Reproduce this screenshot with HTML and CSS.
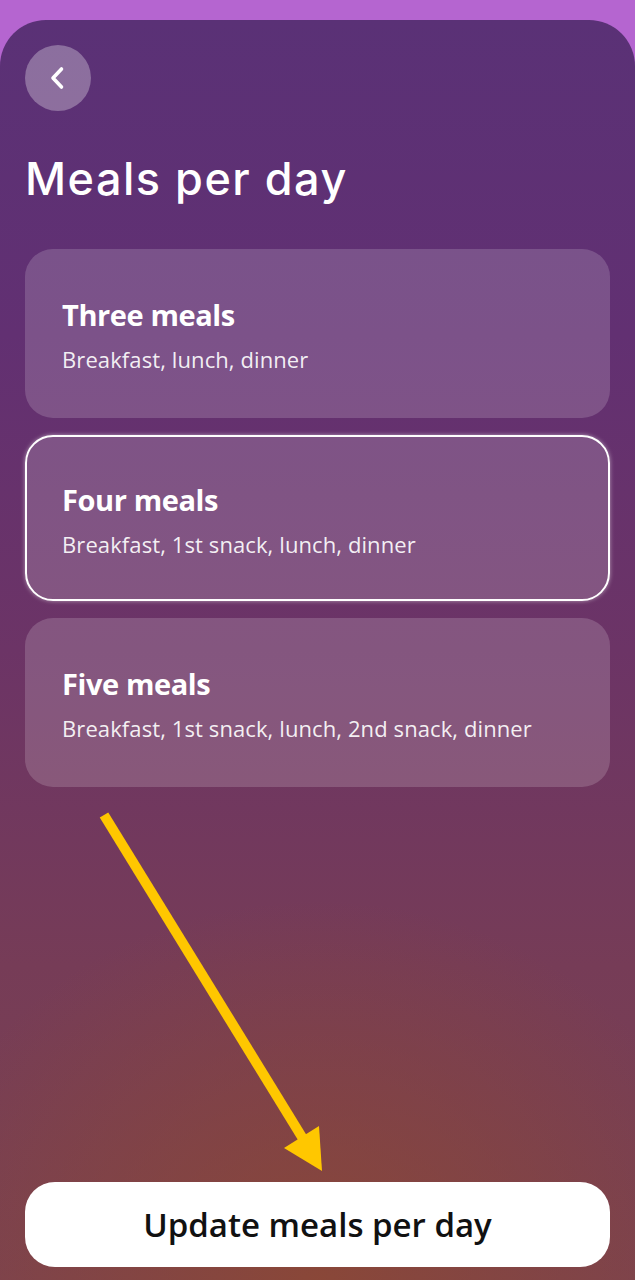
FILE: index.html
```html
<!DOCTYPE html>
<html lang="en">
<head>
<meta charset="utf-8">
<title>Meals per day</title>
<link rel="stylesheet" href="styles.css">
</head>
<body>
<main class="sheet">
  <button class="back" aria-label="Back">
    <svg class="back-icon" width="16" height="24" viewBox="0 0 16 24"><path d="M12.5 3 L4 12 L12.5 21" fill="none" stroke="#fff" stroke-width="3.6" stroke-linecap="round" stroke-linejoin="round"/></svg>
  </button>
  <h1 class="title">Meals per day</h1>
  <ul class="options">
    <li class="option">
      <span class="option-name">Three meals</span>
      <span class="option-desc">Breakfast, lunch, dinner</span>
    </li>
    <li class="option selected">
      <span class="option-name">Four meals</span>
      <span class="option-desc">Breakfast, 1st snack, lunch, dinner</span>
    </li>
    <li class="option">
      <span class="option-name">Five meals</span>
      <span class="option-desc">Breakfast, 1st snack, lunch, 2nd snack, dinner</span>
    </li>
  </ul>
  <div class="spacer"></div>
  <button class="update">Update meals per day</button>
  <svg class="pointer" width="635" height="1280" viewBox="0 0 635 1280">
    <line x1="104" y1="815" x2="305" y2="1142" stroke="#ffc700" stroke-width="10" stroke-linecap="butt"/>
    <polygon points="322,1171 284,1148 319,1126" fill="#ffc700"/>
  </svg>
</main>
</body>
</html>
```
FILE: styles.css
```css
* { box-sizing: border-box; }

html, body {
  margin: 0;
  padding: 0;
}

body {
  background: #b565d0;
  font-family: "Open Sans", "Noto Sans", sans-serif;
  color: #fff;
  width: 635px;
  height: 1280px;
  overflow: hidden;
}

.sheet {
  position: relative;
  margin-top: 20px;
  height: 1260px;
  border-radius: 46px 46px 0 0;
  padding: 25px 25px 13px;
  display: flex;
  flex-direction: column;
  background:
    radial-gradient(ellipse 420px 380px at 50% 100%, rgba(140, 72, 52, 0.85), rgba(140, 72, 52, 0) 100%),
    linear-gradient(180deg, #5a3176 0%, #623072 25%, #6c3466 50%, #763c57 75%, #7b4250 100%);
}

.back {
  width: 66px;
  height: 66px;
  border-radius: 50%;
  border: none;
  padding: 0;
  background: rgba(255, 255, 255, 0.3);
  display: flex;
  align-items: center;
  justify-content: center;
  flex: none;
}

.back-icon {
  margin-left: -3px;
}

.title {
  margin: 42px 0 0 0;
  font-family: "Inter", sans-serif;
  font-weight: 500;
  font-size: 45px;
  line-height: 52px;
  letter-spacing: 1.5px;
}

.options {
  list-style: none;
  margin: 44px 0 0;
  padding: 0;
  display: flex;
  flex-direction: column;
  gap: 17px;
}

.option {
  height: 169px;
  border-radius: 28px;
  background: rgba(255, 255, 255, 0.17);
  padding: 4px 35px 0 35px;
  display: flex;
  flex-direction: column;
  justify-content: center;
  gap: 11px;
  border: 2px solid transparent;
}

.option.selected {
  height: 166px;
  border-color: #fff;
  box-shadow: 0 0 4px rgba(255, 255, 255, 0.5);
}

.option-name {
  font-weight: 700;
  font-size: 29px;
  line-height: 36px;
  letter-spacing: -0.4px;
}

.option-desc {
  font-size: 22px;
  line-height: 30px;
  letter-spacing: 0.1px;
  color: rgba(255, 255, 255, 0.92);
}

.spacer { flex: 1; }

.update {
  height: 85px;
  border: none;
  border-radius: 30px;
  background: #fff;
  color: #111;
  font-family: "Open Sans", sans-serif;
  font-weight: 600;
  font-size: 33px;
  flex: none;
}

.pointer {
  position: absolute;
  left: 0;
  top: -20px;
  pointer-events: none;
}
```
